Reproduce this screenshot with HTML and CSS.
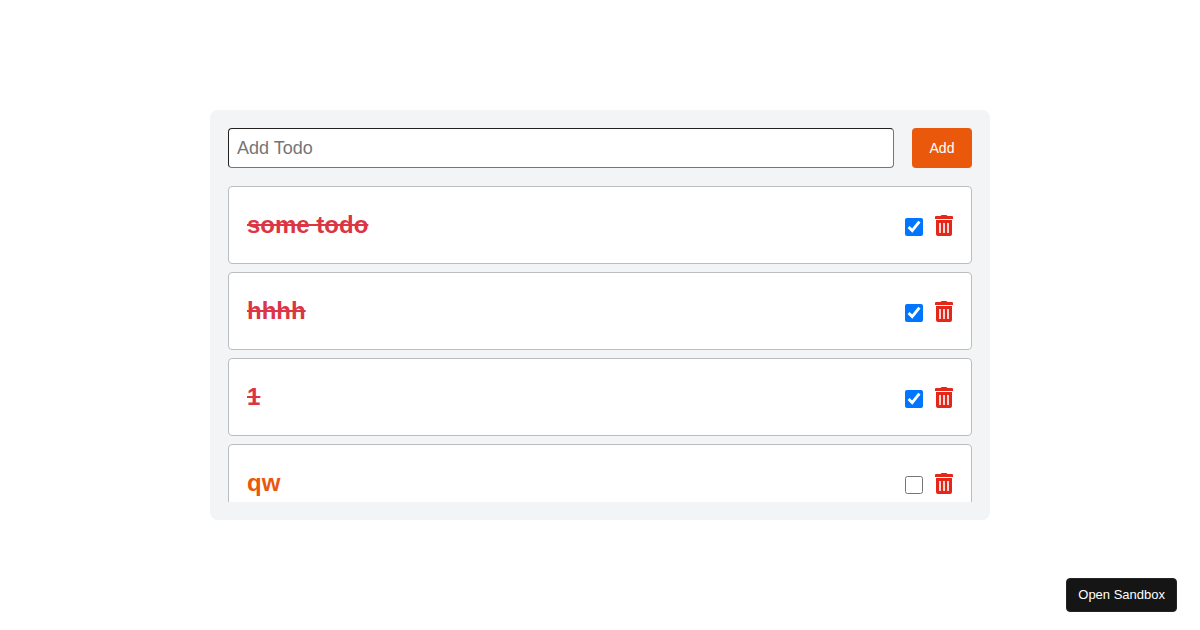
FILE: index.html
```html
<!DOCTYPE html>
<html lang="en">
<head>
<meta charset="utf-8">
<meta name="viewport" content="width=device-width, initial-scale=1">
<title>Todo</title>
<link rel="stylesheet" href="styles.css">
</head>
<body>
<svg class="sprite" aria-hidden="true">
  <symbol id="trash" viewBox="0 0 18 21"><path d="M1 5h16v14a2 2 0 0 1-2 2H3a2 2 0 0 1-2-2z"/><path d="M0 2q0-1 1-1h4.500L6.500 0h5l1 1H17q1 0 1 1v2H0z"/><path class="slots" d="M5 8v10M9 8v10M13 8v10"/></symbol>
</svg>
<main class="page">
  <section class="panel">
    <form class="entry" onsubmit="return false">
      <input class="entry-text" type="text" placeholder="Add Todo" aria-label="Add Todo">
      <button class="entry-add" type="submit">Add</button>
    </form>
    <ul class="todos">
      <li class="todo">
        <label class="todo-title todo-done" for="t1">some todo</label>
        <input class="todo-check" id="t1" type="checkbox" checked>
        <button class="todo-delete" type="button" aria-label="Delete some todo"><svg class="icon"><use href="#trash"/></svg></button>
      </li>
      <li class="todo">
        <label class="todo-title todo-done" for="t2">hhhh</label>
        <input class="todo-check" id="t2" type="checkbox" checked>
        <button class="todo-delete" type="button" aria-label="Delete hhhh"><svg class="icon"><use href="#trash"/></svg></button>
      </li>
      <li class="todo">
        <label class="todo-title todo-done" for="t3">1</label>
        <input class="todo-check" id="t3" type="checkbox" checked>
        <button class="todo-delete" type="button" aria-label="Delete 1"><svg class="icon"><use href="#trash"/></svg></button>
      </li>
      <li class="todo">
        <label class="todo-title" for="t4">qw</label>
        <input class="todo-check" id="t4" type="checkbox">
        <button class="todo-delete" type="button" aria-label="Delete qw"><svg class="icon"><use href="#trash"/></svg></button>
      </li>
    </ul>
  </section>
</main>
<button class="sandbox" type="button">Open Sandbox</button>
</body>
</html>
```

FILE: styles.css
```css
* { box-sizing: border-box; }
body {
  margin: 0;
  background: #fff;
  font-family: "Liberation Sans", Arial, sans-serif;
}
button, input { font-family: inherit; }
.sprite { display: none; }
.page {
  display: flex;
  align-items: center;
  justify-content: center;
  min-height: 100vh;
}
.panel {
  display: flex;
  flex-direction: column;
  gap: 18px;
  width: 65%;
  height: 65vh;
  padding: 18px;
  border-radius: 8px;
  background: #f3f4f6;
}
.entry { display: flex; gap: 18px; }
.entry-text {
  flex: 1;
  min-width: 0;
  height: 40px;
  padding: 0 8px;
  border: 1px inset #767676;
  border-radius: 4px;
  background: #fff;
  font-size: 18px;
}
.entry-text::placeholder { color: #757575; }
.entry-add {
  width: 60px;
  border: 0;
  border-radius: 4px;
  background: #ea580c;
  color: #fff;
  font-size: 14px;
}
.todos {
  flex: 1;
  min-height: 0;
  margin: 0;
  padding: 0;
  overflow: auto;
  scrollbar-width: none;
  list-style: none;
}
.todo {
  display: flex;
  align-items: center;
  gap: 12px;
  height: 78px;
  margin-bottom: 8px;
  padding: 0 18px;
  border: 1px solid #bbbdbf;
  border-radius: 4px;
  background: #fff;
}
.todo-title {
  flex: 1;
  color: #ea580c;
  font-size: 24px;
  font-weight: 700;
  line-height: 28px;
}
.todo-done { color: #dc3545; text-decoration: line-through; }
.todo-check { width: 18px; height: 18px; margin: 4px 0 0; }
.todo-delete { display: flex; padding: 0; border: 0; background: none; color: #e42719; }
.icon { width: 18px; height: 21px; fill: currentColor; }
.slots { stroke: #fbd5d2; stroke-width: 2; }
.sandbox {
  position: fixed;
  right: 23px;
  bottom: 18px;
  padding: 8px 11px;
  border: 1px solid #242424;
  border-radius: 4px;
  background: #151515;
  color: #fff;
  font-size: 13px;
  line-height: 16px;
}
```
